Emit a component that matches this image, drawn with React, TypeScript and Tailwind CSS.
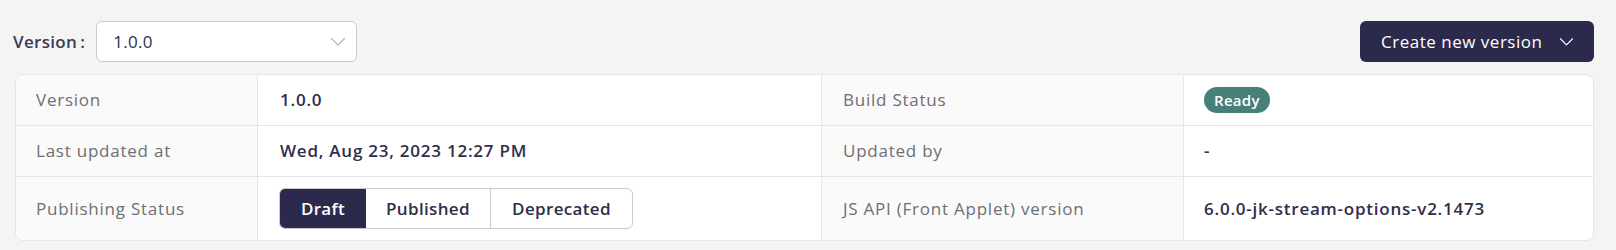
import React from "react";

const font = { fontFamily: "'Open Sans', Lato, sans-serif" };

function Chevron({ className }: { className?: string }) {
  return (
    <svg viewBox="0 0 14 8" className={className} fill="none">
      <path d="M0.5 0.5 L7 7.2 L13.5 0.5" stroke="currentColor" strokeWidth="1.2" strokeLinejoin="round" strokeLinecap="round" />
    </svg>
  );
}

function Segmented() {
  return (
    <div className="flex h-[41px] rounded-md border border-[#c9c9cf] overflow-hidden text-[17px] font-semibold tracking-[0.02em]">
      <div className="w-[86px] flex items-center justify-center bg-[#2b2a4c] text-white">Draft</div>
      <div className="w-[125px] flex items-center justify-center text-[#2f2e4b] border-r border-[#c9c9cf]">Published</div>
      <div className="flex-1 flex items-center justify-center text-[#2f2e4b]">Deprecated</div>
    </div>
  );
}

type Row = { l1: string; v1: React.ReactNode; l2: string; v2: React.ReactNode; h: string };

const rows: Row[] = [
  {
    l1: "Version",
    v1: "1.0.0",
    l2: "Build Status",
    v2: (
      <span className="inline-flex items-center h-[26px] px-[10px] rounded-full bg-[#468078] text-white text-[15px] font-semibold tracking-[0.02em]">
        Ready
      </span>
    ),
    h: "h-[51px] border-b",
  },
  { l1: "Last updated at", v1: "Wed, Aug 23, 2023 12:27 PM", l2: "Updated by", v2: "-", h: "h-[51px] border-b" },
  {
    l1: "Publishing Status",
    v1: (
      <div className="w-[354px] ml-[-1px]">
        <Segmented />
      </div>
    ),
    l2: "JS API (Front Applet) version",
    v2: "6.0.0-jk-stream-options-v2.1473",
    h: "h-[63px]",
  },
];

export default function App() {
  return (
    <div className="min-h-screen bg-[#f4f4f4] pt-[21px]" style={font}>
      <div className="flex items-center justify-between pl-[13px] pr-[22px] tracking-[0.02em]">
        <div className="flex items-center">
          <span className="text-[17px] font-semibold text-[#3b3b55]">
            Version<span className="ml-[3px]">:</span>
          </span>
          <div className="ml-[11px] w-[261px] h-[41px] bg-white border border-[#c9c9cf] rounded-md flex items-center justify-between pl-[16px] pr-[11px]">
            <span className="text-[17px] text-[#2f2e4b]">1.0.0</span>
            <Chevron className="w-[14px] h-[8px] text-[#b4b4b8]" />
          </div>
        </div>
        <button className="w-[234px] h-[41px] rounded-md bg-[#2b2a4c] text-white text-[17px] font-medium tracking-[0.03em] flex items-center justify-between pl-[21px] pr-[21px]">
          <span>Create new version</span>
          <Chevron className="w-[13px] h-[8px]" />
        </button>
      </div>

      <div className="ml-[15px] mr-[22px] mt-[12px] bg-white border border-[#e6e6e8] rounded-lg overflow-hidden text-[17px] tracking-[0.045em]">
        {rows.map((r, i) => (
          <div key={i} className={`flex ${r.h} border-[#e6e6e8]`}>
            <div className="w-[242px] border-r border-[#e6e6e8] bg-[#fafafa] flex items-center pl-[20px] text-[#6e6e73]">
              {r.l1}
            </div>
            <div className="w-[564px] border-r border-[#e6e6e8] flex items-center pl-[22px] font-semibold text-[#2f2e4b]">
              {r.v1}
            </div>
            <div className="w-[362px] border-r border-[#e6e6e8] bg-[#fafafa] flex items-center pl-[21px] text-[#6e6e73]">
              {r.l2}
            </div>
            <div className="flex-1 flex items-center pl-[20px] font-semibold text-[#2f2e4b]">{r.v2}</div>
          </div>
        ))}
      </div>
    </div>
  );
}
